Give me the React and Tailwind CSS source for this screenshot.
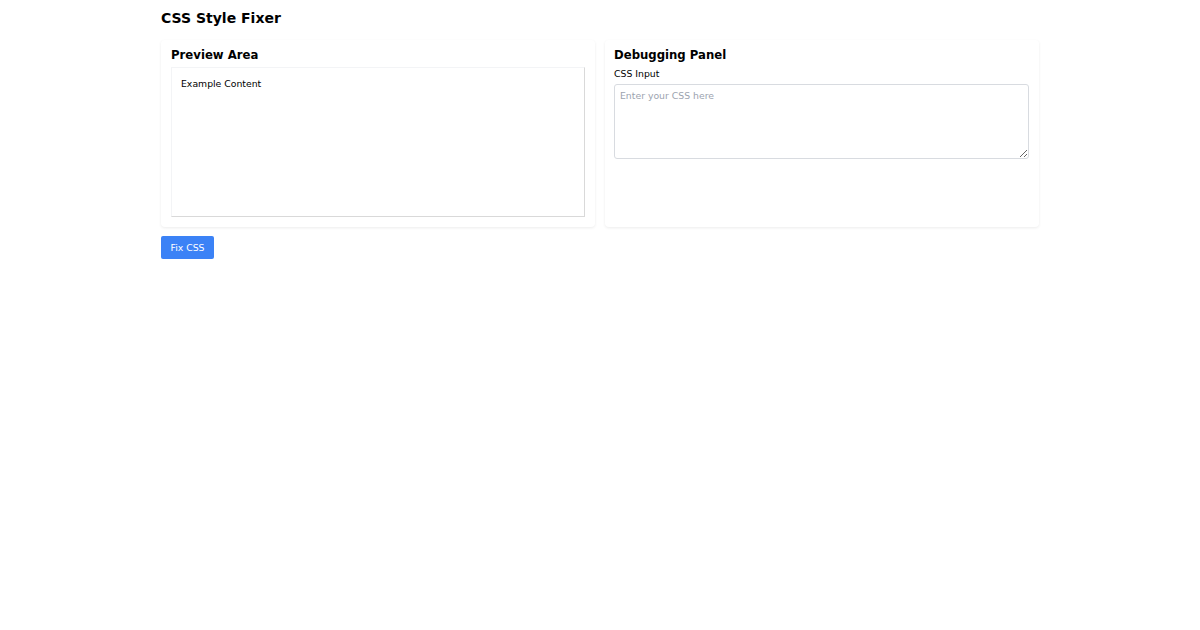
export default function App() {
  return (
    <div className="min-h-screen bg-white" style={{ fontFamily: '"DejaVu Sans", sans-serif' }}>
      <div className="w-[878px] mx-auto pt-2">
        <h1 className="text-[14px] leading-[20px] font-bold text-black mb-3">CSS Style Fixer</h1>
        <div className="grid grid-cols-2 gap-[10px]">
          <div className="min-w-0 bg-white rounded shadow-[0_1px_3px_rgba(0,0,0,0.08)] px-[10px] pt-2 pb-[10px]">
            <h2 className="text-[11.7px] leading-[14px] font-bold text-black mb-[5px]">Preview Area</h2>
            <div className="h-[150px] border border-t-[#f3f4f6] border-l-[#f3f4f6] border-r-[#d9d9d9] border-b-[#d9d9d9] px-[9px] py-[10px]">
              <p className="text-[9.3px] leading-[12px] text-black">Example Content</p>
            </div>
          </div>
          <div className="min-w-0 bg-white rounded shadow-[0_1px_3px_rgba(0,0,0,0.08)] pl-[9px] pr-[10px] pt-2 pb-[10px]">
            <h2 className="text-[11.7px] leading-[14px] font-bold text-black mb-[6px]">Debugging Panel</h2>
            <label className="block text-[9.3px] leading-[12px] text-black mb-[4px]">CSS Input</label>
            <textarea
              className="block w-full h-[75px] border border-[#d8dbe0] rounded-[3px] px-[5px] py-[5px] text-[9.3px] leading-[12px] placeholder:text-[#9ca3af] outline-none"
              style={{ fontFamily: '"DejaVu Sans", sans-serif' }}
              placeholder="Enter your CSS here"
            />
          </div>
        </div>
        <button className="mt-[9px] w-[53px] h-[23px] bg-[#3b82f6] text-white text-[9.3px] rounded-[2px] flex items-center justify-center">
          Fix CSS
        </button>
      </div>
    </div>
  );
}
